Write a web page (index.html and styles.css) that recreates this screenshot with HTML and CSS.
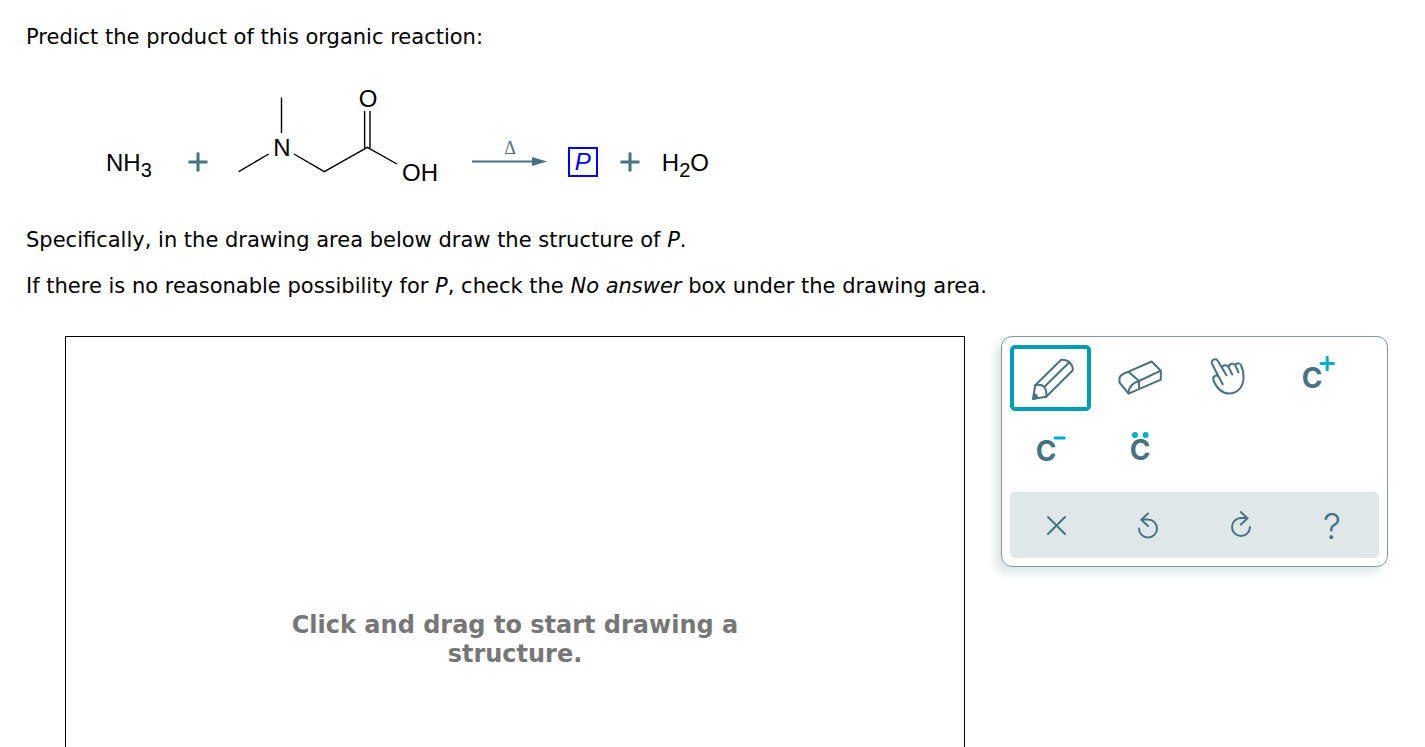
FILE: index.html
```html
<!DOCTYPE html>
<html lang="en">
<head>
    <meta charset="UTF-8">
    <meta name="viewport" content="width=device-width, initial-scale=1.0">
    <title>Predict the product</title>
    <link rel="stylesheet" href="styles.css">
</head>
<body>
    <main class="question">
        <p>Predict the product of this organic reaction:</p>

        <div class="reaction">
            <span class="formula reactant">NH<sub>3</sub></span>
            <svg class="plus" viewBox="0 0 20 50"><path d="M0.5 24H19.5M10 14.5V33.5"/></svg>
            <svg class="molecule" viewBox="0 0 202 100">
                <path d="M43.5 9.5V45M0.7 83.7L30.7 66M56 66L86.3 83.7L129.3 59.3L159 76M126.6 23V60M132 23V60"/>
                <text x="44" y="68" text-anchor="middle">N</text>
                <text x="130" y="19" text-anchor="middle">O</text>
                <text x="164" y="93">OH</text>
            </svg>
            <svg class="arrow" viewBox="0 0 76 50">
                <path d="M0 23.5H62" stroke="#457382" stroke-width="2"/>
                <path d="M60 19L75 23.5L60 28Z" fill="#457382"/>
                <text x="38" y="16" text-anchor="middle">Δ</text>
            </svg>
            <span class="product">P</span>
            <svg class="plus" viewBox="0 0 20 50"><path d="M0.5 24H19.5M10 14.5V33.5"/></svg>
            <span class="formula">H<sub>2</sub>O</span>
        </div>

        <p>Specifically, in the drawing area below draw the structure of <i>P</i>.</p>
        <p>If there is no reasonable possibility for <i>P</i>, check the <i>No answer</i> box under the drawing area.</p>

        <div class="workspace">
            <div class="canvas">
                <p class="hint">Click and drag to start drawing a structure.</p>
            </div>

            <div class="toolbox">
                <div class="tools">
                    <button class="tool active" type="button" aria-label="Pencil">
                        <svg viewBox="0 0 57 56">
                            <path d="M13.2 35.2L39.2 9.7Q44.5 9.5 47.5 12.3Q51 16 50.8 20.3L24.2 46.8L11 49Z"/>
                            <path d="M13.2 35.2Q19.5 34 22.2 37Q25 40.5 24.2 46.8M22.2 37L46.8 12.8"/>
                            <path class="fill" d="M11.5 44Q16 43 16 48.2L10.5 49.5Z"/>
                        </svg>
                    </button>
                    <button class="tool" type="button" aria-label="Eraser">
                        <svg viewBox="0 0 57 56">
                            <path d="M17.5 21.7L40.7 11.5L49.8 20.7V29.7L17.5 43.7L8.5 32.5V28Q9 24.5 17.5 21.7L28 31V39M28 31L49.8 20.7M28 31Q17.5 34 17.5 43.7"/>
                        </svg>
                    </button>
                    <button class="tool" type="button" aria-label="Move">
                        <svg viewBox="0 0 57 56">
                            <path d="M22.7 34.3L12.2 14.2C10 9.8 16 7.6 18 11.2L26.5 25.3M22 17.8C22.5 14.8 27.3 14.3 28.7 17.5L32.3 24.5M28.9 16.8C29 13.4 34 12.7 35.5 15.8L38.5 22.5M35.5 15.2C36.2 12.5 39.8 12.6 41 15.2C43 19.5 43.7 24 43.5 28.5C43 37.5 37 43.5 29.3 43.5C21 43.5 16.5 37.5 13.5 30.5C12.2 26.5 16 24.3 18.5 26.5"/>
                        </svg>
                    </button>
                    <button class="tool" type="button" aria-label="Positive charge">
                        <svg viewBox="0 0 57 56">
                            <text x="23" y="38" text-anchor="middle">C</text>
                            <path class="accent" d="M32 13.5H44.5M38.2 7.3V19.7"/>
                        </svg>
                    </button>
                    <button class="tool" type="button" aria-label="Negative charge">
                        <svg viewBox="0 0 57 56">
                            <text x="24" y="37" text-anchor="middle">C</text>
                            <path class="accent" d="M33 14H42.3"/>
                        </svg>
                    </button>
                    <button class="tool" type="button" aria-label="Lone pair">
                        <svg viewBox="0 0 57 56">
                            <text x="29" y="36" text-anchor="middle">C</text>
                            <circle class="dot" cx="24" cy="11" r="3"/>
                            <circle class="dot" cx="34.6" cy="11" r="3"/>
                        </svg>
                    </button>
                </div>
                <div class="actions">
                    <button type="button" aria-label="Clear">
                        <svg viewBox="0 0 32 32"><path d="M8 8L25 25M25 8L8 25"/></svg>
                    </button>
                    <button type="button" aria-label="Undo">
                        <svg viewBox="0 0 32 32"><path d="M16 4.5L9.3 10.7L16 17M9.3 10.5H16A9 9 0 1 1 7 19.5"/></svg>
                    </button>
                    <button type="button" aria-label="Redo">
                        <svg viewBox="0 0 32 32"><path d="M15.8 3L22.5 9.2L15.8 15.5M22.5 9H16A9 9 0 1 0 25 18"/></svg>
                    </button>
                    <button type="button" aria-label="Help">
                        <svg viewBox="0 0 32 32"><text x="15" y="30" text-anchor="middle">?</text></svg>
                    </button>
                </div>
            </div>
        </div>
    </main>
</body>
</html>
```
FILE: styles.css
```css
* {
    margin: 0;
    padding: 0;
    box-sizing: border-box;
}

body {
    font-family: Verdana, 'DejaVu Sans', sans-serif;
    font-size: 21px;
    line-height: 28px;
    background: #ffffff;
    color: #000000;
    height: 100vh;
    overflow: hidden;
}

svg {
    display: block;
    fill: none;
}

.question {
    padding: 23px 37px 0 26px;
}

.question > p {
    margin-bottom: 18px;
}

/* reaction scheme */
.reaction {
    display: flex;
    align-items: flex-end;
    padding: 19px 0 0 80px;
    margin-bottom: 38px;
    font-family: 'Liberation Sans', Arial, sans-serif;
    font-size: 24px;
}

.formula {
    line-height: 50px;
}

.formula sub {
    font-size: 20px;
    line-height: 0;
    vertical-align: -6px;
}

.reactant {
    margin-right: 14px;
}

.plus {
    width: 20px;
    height: 50px;
    margin: 0 22px;
    stroke: #457382;
    stroke-width: 3;
}

.molecule {
    width: 202px;
    height: 100px;
    margin: 0 32px 0 8px;
    overflow: visible;
    stroke: #000000;
    stroke-width: 1.4;
}

.molecule text {
    fill: #000000;
    stroke: none;
}

.arrow {
    width: 76px;
    height: 50px;
    margin-right: 20px;
}

.arrow text {
    font-family: 'Liberation Serif', serif;
    font-size: 18px;
    fill: #457382;
}

.product {
    width: 30px;
    height: 30px;
    margin-bottom: 11px;
    border: 2px solid #0000ff;
    color: #0000ff;
    font-style: italic;
    line-height: 26px;
    text-align: center;
}

/* drawing area and tools */
.workspace {
    display: flex;
    align-items: flex-start;
    gap: 36px;
    padding: 18px 0 0 39px;
}

.canvas {
    flex: 1;
    min-height: 608px;
    display: flex;
    align-items: center;
    justify-content: center;
    border: 1px solid #000000;
}

.hint {
    max-width: 460px;
    color: #777777;
    font-size: 24px;
    font-weight: bold;
    line-height: 29px;
    text-align: center;
}

.toolbox {
    width: 387px;
    padding: 8px;
    border: 1px solid #7a9ba5;
    border-radius: 11px;
    box-shadow: -6px 6px 10px #dfe7e8;
}

.tools {
    display: grid;
    grid-template-columns: repeat(4, 81px);
    gap: 8px;
    margin-bottom: 7px;
}

button {
    display: flex;
    align-items: center;
    justify-content: center;
    height: 66px;
    background: none;
    border: none;
    cursor: pointer;
}

button svg {
    stroke: #457382;
    stroke-width: 2;
    stroke-linejoin: round;
    stroke-linecap: round;
}

.tool {
    border: 4px solid transparent;
    border-radius: 5px;
}

.tool.active {
    border-color: #009db5;
}

.tool svg {
    width: 57px;
    height: 56px;
}

.tool text {
    font-family: Inter, sans-serif;
    font-size: 28px;
    font-weight: 700;
    fill: #457382;
    stroke: none;
}

.tool .accent {
    stroke: #00aec9;
    stroke-width: 3;
}

.tool .dot {
    fill: #00aec9;
    stroke: none;
}

.tool .fill {
    fill: #457382;
    stroke: none;
}

.actions {
    display: grid;
    grid-template-columns: repeat(4, 1fr);
    background: #dfe7e8;
    border-radius: 5px;
}

.actions svg {
    width: 32px;
    height: 32px;
    overflow: visible;
}

.actions text {
    font-family: Inter, sans-serif;
    font-size: 36px;
    font-weight: 300;
    fill: #457382;
    stroke: none;
}
```
